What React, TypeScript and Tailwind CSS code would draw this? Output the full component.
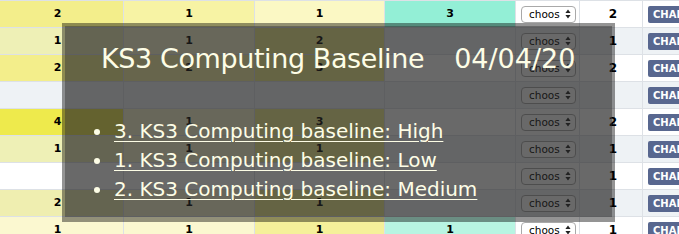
import React from 'react';

type Cell = { v: string; bg?: string };

const YEL = 'bg-[#f3ee8b]';
const YEL2 = 'bg-[#f7f3a4]';
const CREAM = 'bg-[#fbf8d0]';
const GRN = 'bg-[#eef0b6]';

const rows: { cells: Cell[]; score: string }[] = [
  { cells: [{ v: '2', bg: YEL }, { v: '1', bg: YEL2 }, { v: '1', bg: 'bg-[#fbf8c4]' }, { v: '3', bg: 'bg-[#93efd6]' }], score: '2' },
  { cells: [{ v: '1', bg: GRN }, { v: '1', bg: CREAM }, { v: '2', bg: YEL }, { v: '' }], score: '1' },
  { cells: [{ v: '2', bg: YEL }, { v: '2', bg: YEL2 }, { v: '3', bg: YEL }, { v: '' }], score: '2' },
  { cells: [{ v: '' }, { v: '' }, { v: '' }, { v: '' }], score: '' },
  { cells: [{ v: '4', bg: 'bg-[#eeea4c]' }, { v: '1', bg: CREAM }, { v: '3', bg: YEL }, { v: '' }], score: '2' },
  { cells: [{ v: '1', bg: GRN }, { v: '1', bg: CREAM }, { v: '1', bg: YEL }, { v: '' }], score: '1' },
  { cells: [{ v: '' }, { v: '' }, { v: '' }, { v: '' }], score: '1' },
  { cells: [{ v: '2', bg: 'bg-[#efeeb0]' }, { v: '1', bg: CREAM }, { v: '1', bg: YEL }, { v: '' }], score: '1' },
  { cells: [{ v: '1', bg: CREAM }, { v: '1', bg: CREAM }, { v: '1', bg: 'bg-[#f5f09a]' }, { v: '1', bg: 'bg-[#b8f5e2]' }], score: '1' },
];

const widths = ['w-[132px]', 'w-[131px]', 'w-[130px]', 'w-[131px]'];

const levels = [
  '3. KS3 Computing baseline: High',
  '1. KS3 Computing baseline: Low',
  '2. KS3 Computing baseline: Medium',
];

function FakeSelect() {
  return (
    <div className="ml-[5px] flex h-[17px] w-[55px] items-center justify-between rounded-[4px] border border-[#a9a9a9] bg-white pl-[7px] pr-[4px] text-[10.5px] leading-none text-black">
      <span>choos</span>
      <svg width="6" height="10" viewBox="0 0 6 10" className="shrink-0">
        <path d="M3 0.5 L5.6 4 H0.4 Z M3 9.5 L5.6 6 H0.4 Z" fill="#222" />
      </svg>
    </div>
  );
}

export default function App() {
  return (
    <div className="relative h-[234px] w-[679px] overflow-hidden bg-white" style={{ fontFamily: '"DejaVu Sans", Verdana, sans-serif' }}>
      <div className="-ml-[8px] border-t border-[#dde1e6]">
        {rows.map((r, i) => {
          const stripe = i % 2 === 1 ? 'bg-[#eef2f5]' : 'bg-white';
          return (
            <div key={i} className={`flex h-[27px] border-b border-[#dde1e6] ${stripe}`}>
              {r.cells.map((c, j) => (
                <div
                  key={j}
                  className={`${widths[j]} flex shrink-0 items-center justify-center border-r border-[#dde1e6] text-[11px] font-bold text-black ${c.bg ?? ''}`}
                >
                  {c.v}
                </div>
              ))}
              <div className="flex w-[64px] shrink-0 items-center border-r border-[#dde1e6]">
                <FakeSelect />
              </div>
              <div className="flex w-[63px] shrink-0 items-center justify-center border-r border-[#dde1e6] pl-[4px] text-[12px] font-bold text-black">
                {r.score}
              </div>
              <div className="flex w-[120px] shrink-0 items-center">
                <div className="ml-[5px] flex h-[17px] items-center rounded-[2px] bg-[#58678f] px-[5px] text-[10px] font-bold text-white">
                  CHART
                </div>
              </div>
            </div>
          );
        })}
      </div>

      <div className="absolute left-[62px] top-[23px] h-[199px] w-[553px] border-[3px] border-b-[5px] border-[rgba(0,0,0,0.42)] bg-[rgba(34,34,34,0.68)] bg-clip-padding text-[#fdfde6]">
        <div className="flex pl-[36px] pt-[17px] text-[27px] leading-[32px]">
          <span className="tracking-[-0.4px]">KS3 Computing Baseline</span>
          <span className="ml-[30px]">04/04/20</span>
        </div>
        <ul className="mt-[42px] pl-[29px] text-[20px] leading-[29px]">
          {levels.map((l) => (
            <li key={l} className="flex items-center">
              <span className="mr-[14px] h-[6px] w-[6px] shrink-0 rounded-full bg-[#fdfde6]" />
              <a href="#" className="underline underline-offset-[3px] decoration-1">
                {l}
              </a>
            </li>
          ))}
        </ul>
      </div>
    </div>
  );
}
